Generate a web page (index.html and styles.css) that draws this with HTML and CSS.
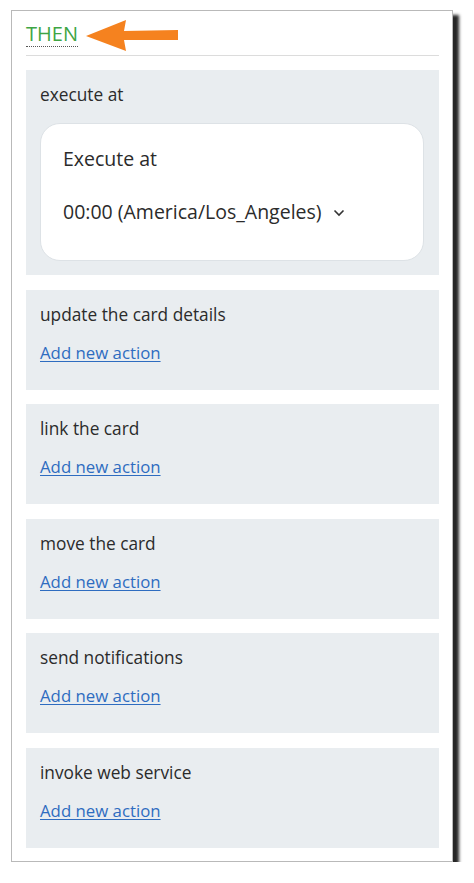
FILE: index.html
```html
<!DOCTYPE html>
<html>
<head>
<meta charset="utf-8">
<link rel="stylesheet" href="styles.css">
</head>
<body>
<div class="frame">
  <div class="header">
    <span class="then">THEN</span>
    <svg class="arrow" width="100" height="34" viewBox="0 0 100 34">
      <path d="M2 18 L42 2 L40 13 L94 12 L94 22 L40 22 L42 33 Z" fill="#f5821f"/>
    </svg>
  </div>
  <div class="sections">
    <div class="box">
      <div class="title">execute at</div>
      <div class="card">
        <div class="label">Execute at</div>
        <div class="value">00:00 (America/Los_Angeles)
          <svg class="chev" width="12" height="8" viewBox="0 0 12 8"><path d="M1.5 1.5 L6 6 L10.5 1.5" fill="none" stroke="#333" stroke-width="1.6"/></svg>
        </div>
      </div>
    </div>
    <div class="box small">
      <div class="title">update the card details</div>
      <a class="link" href="#">Add new action</a>
    </div>
    <div class="box small">
      <div class="title">link the card</div>
      <a class="link" href="#">Add new action</a>
    </div>
    <div class="box small">
      <div class="title">move the card</div>
      <a class="link" href="#">Add new action</a>
    </div>
    <div class="box small">
      <div class="title">send notifications</div>
      <a class="link" href="#">Add new action</a>
    </div>
    <div class="box small">
      <div class="title">invoke web service</div>
      <a class="link" href="#">Add new action</a>
    </div>
  </div>
</div>
</body>
</html>
```
FILE: styles.css
```css
html, body {
  margin: 0;
  padding: 0;
  background: #fff;
  font-family: "Open Sans", "Noto Sans", sans-serif;
  color: #2b2b2b;
}
.frame {
  position: relative;
  margin: 10px 0 0 11px;
  width: 442px;
  height: 852px;
  box-sizing: border-box;
  border: 1px solid #b9b9b9;
  box-shadow: 6px 5px 3px rgba(0, 0, 0, 0.85);
  padding: 0 13px 0 14px;
  background: #fff;
}
.header {
  position: relative;
  padding-top: 11px;
  padding-bottom: 8px;
  border-bottom: 1px solid #dcdcdc;
}
.then {
  display: inline-block;
  font-size: 20px;
  font-weight: 500;
  line-height: 24px;
  color: #3ea544;
  border-bottom: 1px dotted #555;
}
.arrow {
  position: absolute;
  left: 58px;
  top: 7px;
}
.sections {
  margin-top: 14px;
  display: flex;
  flex-direction: column;
  gap: 14.5px;
}
.box {
  background: #e9edf0;
  padding: 13px 15px 14px 14px;
}
.box.small {
  height: 100px;
  box-sizing: border-box;
  display: flex;
  flex-direction: column;
  align-items: flex-start;
}
.title {
  font-size: 17.3px;
  font-weight: 500;
  line-height: 24px;
  color: #2b2b2b;
}
.card {
  margin-top: 16px;
  background: #fff;
  border: 1px solid #dde2e6;
  border-radius: 20px;
  height: 138px;
  box-sizing: border-box;
  padding: 23px 22px 0 22px;
}
.label, .value {
  font-size: 19.5px;
  line-height: 24px;
  color: #2b2b2b;
}
.value {
  margin-top: 29px;
  display: flex;
  align-items: center;
}
.chev {
  margin-left: 11px;
  margin-top: 1px;
}
.link {
  margin-top: 14px;
  font-size: 16.8px;
  line-height: 24px;
  color: #2e6cc0;
  text-decoration: underline;
  text-underline-offset: 2px;
}
```
